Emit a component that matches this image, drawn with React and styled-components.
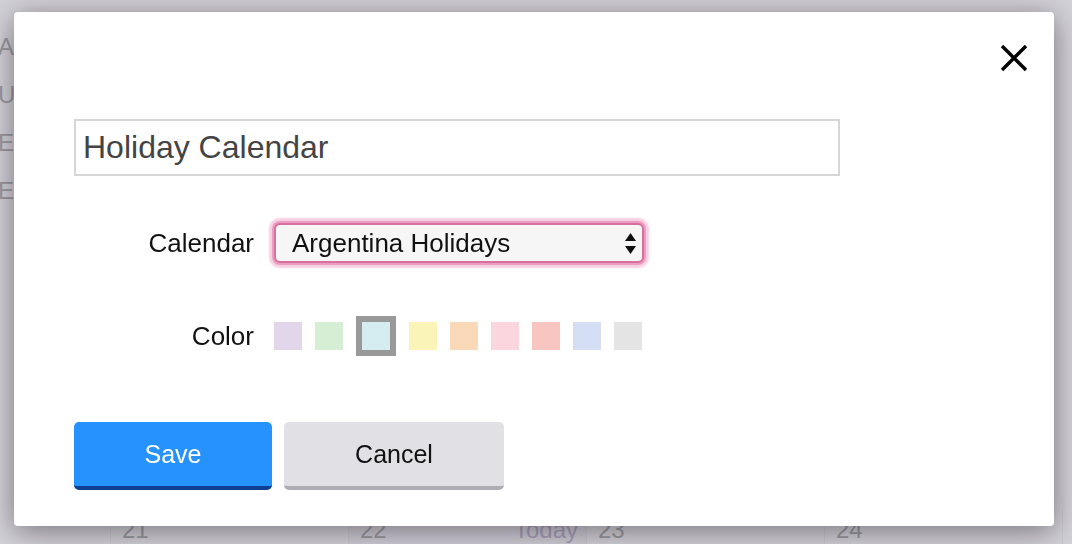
import React, {useState} from 'react';
import styled, {createGlobalStyle} from "styled-components";

const GlobalStyle = createGlobalStyle`
  html, body {
    margin: 0;
    padding: 0;
    width: 100%;
    height: 100%;
    overflow: hidden;
    background: #ffffff;
    font-family: "Liberation Sans", Arial, Helvetica, sans-serif;
  }
  * {
    box-sizing: border-box;
  }
`

// calendar page that sits behind the dialog
const Page = styled.div`
  width: 1072px;
  height: 544px;
  display: flex;
  flex-direction: column;
  color: #b8b8b8;
`

const MonthColumn = styled.div`
  height: 518px;
  display: flex;
  flex-direction: column;
  gap: 20px;
  padding-top: 33px;
  margin-left: -2px;
  font-size: 24px;
`

const WeekRow = styled.div`
  display: grid;
  grid-template-columns: 110px repeat(4, 238px) 1fr;
  flex: 1;
`

const DayCell = styled.div`
  display: flex;
  justify-content: space-between;
  padding: 8px 8px 0 11px;
  font-size: 24px;
  border-left: ${props => props.$first ? "none" : "1px solid #f4f4f4"};
  background: ${props => props.$today ? "#fbf9fd" : "transparent"};
`

const TodayTag = styled.span`
  color: #cbbfdc;
`

const Overlay = styled.div`
  position: fixed;
  inset: 0;
  background: rgba(60, 48, 80, 0.22);
  padding: 12px 18px 0 14px;
`

const Modal = styled.div`
  width: 1040px;
  height: 514px;
  background: #ffffff;
  border-radius: 4px;
  box-shadow: 0 5px 30px rgba(0, 0, 0, 0.45);
  padding: 31px 26px 0 60px;
  display: flex;
  flex-direction: column;
`

const Header = styled.div`
  display: flex;
  justify-content: flex-end;
  height: 28px;
`

const CloseButton = styled.button`
  width: 28px;
  height: 28px;
  margin-top: 1px;
  padding: 0;
  border: none;
  background: none;
  cursor: pointer;
  display: flex;
`

const TitleInput = styled.input`
  margin-top: 48px;
  width: 766px;
  height: 57px;
  border: 2px solid #d6d6d6;
  padding: 0 7px;
  font-family: inherit;
  font-size: 32px;
  color: #444444;
  outline: none;
`

const Row = styled.div`
  display: flex;
  align-items: center;
  gap: 20px;
  margin-top: ${props => props.$top}px;
  height: 40px;
`

const Label = styled.div`
  width: 180px;
  text-align: right;
  font-size: 26px;
  color: #111111;
`

const SelectBox = styled.div`
  width: 370px;
  height: 40px;
  border: 2px solid #d8709f;
  border-radius: 6px;
  box-shadow: 0 0 0 2px #eb9cc0, 0 0 2px 5px #f7cfe1;
  background: #f6f6f6;
  display: flex;
  align-items: center;
  justify-content: space-between;
  padding: 0 6px 0 16px;
  font-size: 26px;
  color: #111111;
`

const Swatches = styled.div`
  display: flex;
  align-items: center;
  gap: 13px;
`

const Swatch = styled.div`
  width: ${props => props.$selected ? 40 : 28}px;
  height: ${props => props.$selected ? 40 : 28}px;
  background: ${props => props.$color};
  border: ${props => props.$selected ? "6px solid #999999" : "none"};
  cursor: pointer;
`

const Buttons = styled.div`
  display: flex;
  gap: 12px;
  margin-top: 66px;
`

const Button = styled.button`
  width: ${props => props.$width}px;
  height: 68px;
  border: none;
  border-bottom: 4px solid ${props => props.$primary ? "#0d3f92" : "#aeadb3"};
  border-radius: 5px;
  background: ${props => props.$primary ? "#2692fd" : "#e1e0e5"};
  color: ${props => props.$primary ? "#ffffff" : "#111111"};
  font-family: inherit;
  font-size: 25px;
  padding: 0;
  cursor: pointer;
`

const colors = [
    "#e1d6ea", "#d6eed4", "#d5edf1", "#faf4b8", "#fad9b8",
    "#fbd6de", "#f8c5c0", "#d4def5", "#e4e4e4"
]

const App = () => {
    const [selected, setSelected] = useState(2)
    const [title, setTitle] = useState("Holiday Calendar")

    return (
        <>
            <GlobalStyle/>
            <Page>
                <MonthColumn>
                    <span>A</span>
                    <span>U</span>
                    <span>E</span>
                    <span>E</span>
                </MonthColumn>
                <WeekRow>
                    <DayCell $first/>
                    <DayCell>21</DayCell>
                    <DayCell $today>22<TodayTag>Today</TodayTag></DayCell>
                    <DayCell>23</DayCell>
                    <DayCell>24</DayCell>
                    <DayCell/>
                </WeekRow>
            </Page>
            <Overlay>
                <Modal>
                    <Header>
                        <CloseButton aria-label="Close">
                            <svg width="28" height="28" viewBox="0 0 28 28">
                                <path d="M2 2 L26 26 M26 2 L2 26" stroke="#000" strokeWidth="3.4" fill="none"/>
                            </svg>
                        </CloseButton>
                    </Header>
                    <TitleInput value={title} onChange={e => setTitle(e.target.value)}/>
                    <Row $top={47}>
                        <Label>Calendar</Label>
                        <SelectBox>
                            <span>Argentina Holidays</span>
                            <svg width="11" height="21" viewBox="0 0 11 21">
                                <path d="M5.5 0 L11 8 L0 8 Z M0 13 L11 13 L5.5 21 Z" fill="#111"/>
                            </svg>
                        </SelectBox>
                    </Row>
                    <Row $top={53}>
                        <Label>Color</Label>
                        <Swatches>
                            {colors.map((c, i) => (
                                <Swatch key={c} $color={c} $selected={i === selected}
                                        onClick={() => setSelected(i)}/>
                            ))}
                        </Swatches>
                    </Row>
                    <Buttons>
                        <Button $primary $width={198}>Save</Button>
                        <Button $width={220}>Cancel</Button>
                    </Buttons>
                </Modal>
            </Overlay>
        </>
    );
};

export default App;
